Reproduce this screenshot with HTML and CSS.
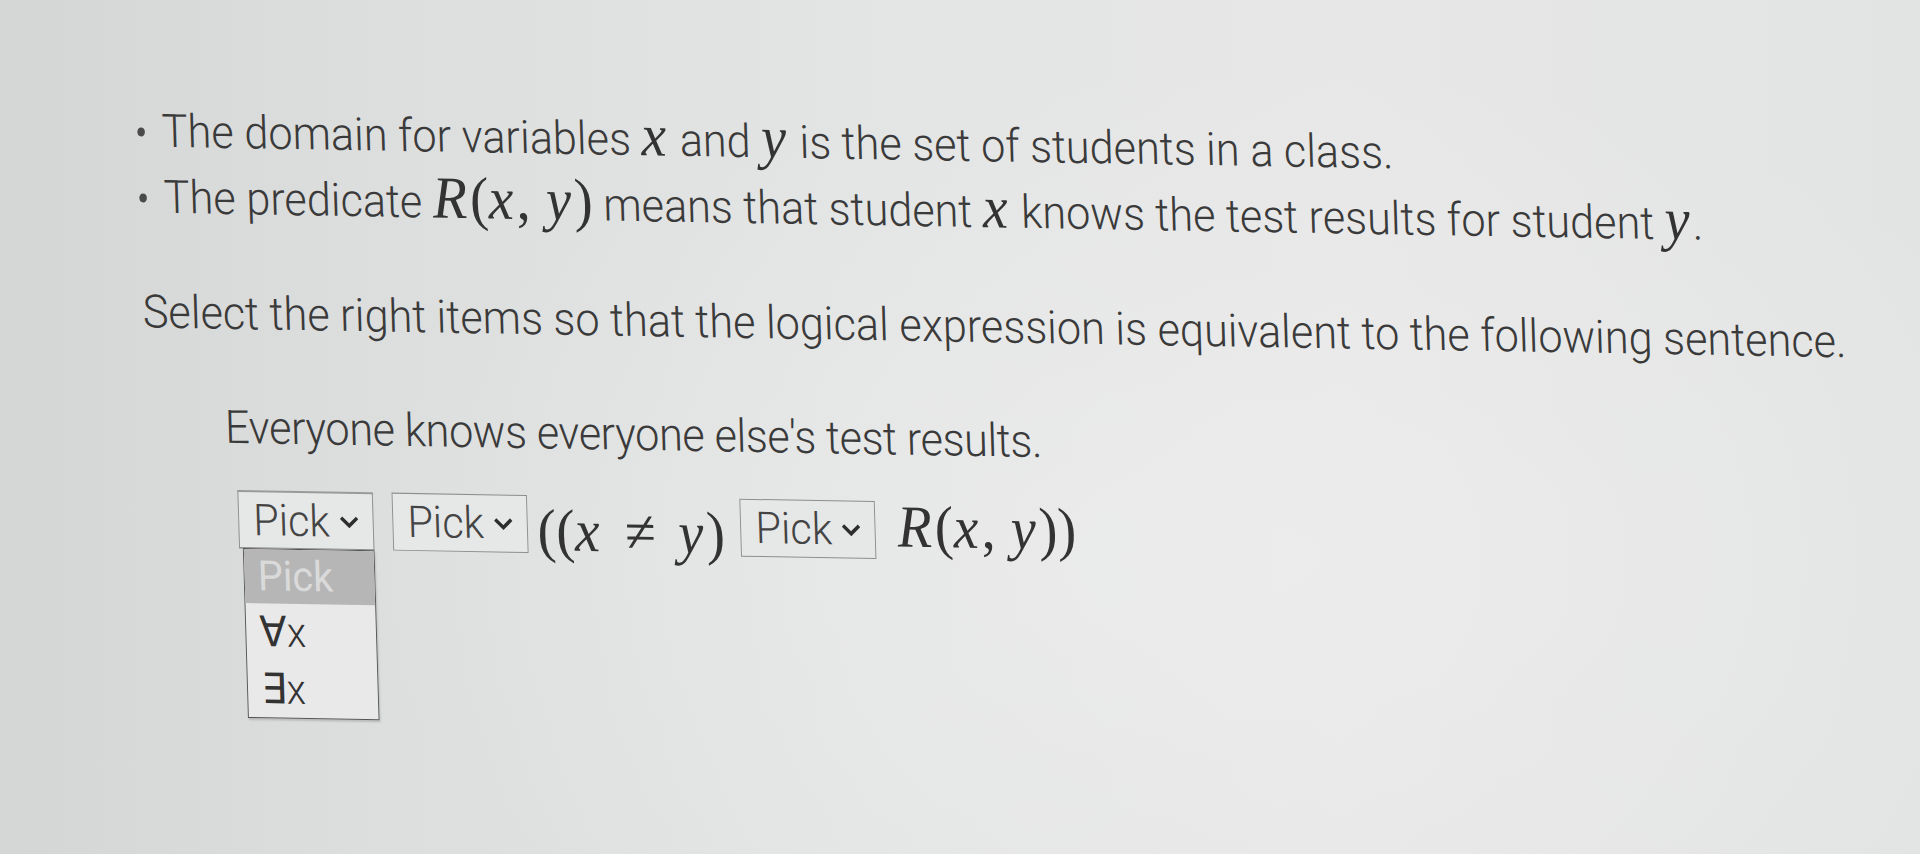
FILE: index.html
```html
<!DOCTYPE html>
<html lang="en">
<head>
<meta charset="utf-8">
<title>Quantifiers</title>
<link rel="stylesheet" href="styles.css">
</head>
<body>
<div class="page">
  <ul class="facts">
    <li>The domain for variables <span class="m"><i>x</i></span> and <span class="m"><i>y</i></span> is the set of students in a class.</li>
    <li>The predicate <span class="m"><i>R</i>(<i>x</i>,<span class="thin"></span><i>y</i>)</span> means that student <span class="m"><i>x</i></span> knows the test results for student <span class="m"><i>y</i></span>.</li>
  </ul>
  <p class="prompt">Select the right items so that the logical expression is equivalent to the following sentence.</p>
  <div class="task">
    <p class="sentence">Everyone knows everyone else's test results.</p>
    <div class="expr">
      <div class="pick first">
        <span class="pick-label">Pick</span>
        <svg class="chev" viewBox="0 0 22 14" width="22" height="14"><path d="M2.5 3 L11 11 L19.5 3" fill="none" stroke="#2e2e2e" stroke-width="3.6"/></svg>
        <ul class="menu">
          <li class="hl">Pick</li>
          <li>∀x</li>
          <li>∃x</li>
        </ul>
      </div>
      <div class="pick">
        <span class="pick-label">Pick</span>
        <svg class="chev" viewBox="0 0 22 14" width="22" height="14"><path d="M2.5 3 L11 11 L19.5 3" fill="none" stroke="#2e2e2e" stroke-width="3.6"/></svg>
      </div>
      <span class="m big b1">((<i>x</i><span class="rel">≠</span><i>y</i>)</span>
      <div class="pick">
        <span class="pick-label">Pick</span>
        <svg class="chev" viewBox="0 0 22 14" width="22" height="14"><path d="M2.5 3 L11 11 L19.5 3" fill="none" stroke="#2e2e2e" stroke-width="3.6"/></svg>
      </div>
      <span class="m big b2"><i>R</i>(<i>x</i>,<span class="thin"></span><i>y</i>))</span>
    </div>
  </div>
</div>
</body>
</html>
```

FILE: styles.css
```css
html, body {
  margin: 0;
  height: 854px;
  overflow: hidden;
}

body {
  background:
    radial-gradient(ellipse 900px 500px at 1250px 560px, rgba(240,240,240,0.55), rgba(240,240,240,0) 100%),
    linear-gradient(90deg, #d4d5d5 0%, #dcdddd 18%, #e3e4e4 45%, #e7e7e7 70%, #e2e3e3 100%);
  font-family: Roboto, "Liberation Sans", sans-serif;
  font-weight: 300;
  color: #3a3a3a;
}

.page {
  width: 1990px;
  padding-top: 95px;
  white-space: nowrap;
  transform-origin: 0 0;
  transform: matrix(0.94, 0.0165, 0.03, 1, 0, 0);
  font-size: 46px;
  line-height: 66px;
}

.facts {
  list-style: none;
  margin: 0;
  padding: 0 0 0 142px;
}

.facts li::before {
  content: "";
  display: inline-block;
  width: 8px;
  height: 9px;
  border-radius: 50%;
  background: #4a4a4a;
  margin-right: 18px;
  vertical-align: 10px;
}

.m {
  font-family: "Liberation Serif", "DejaVu Serif", serif;
  font-weight: 400;
  font-size: 1.3em;
  line-height: 0;
  color: #333;
}

.m i {
  font-style: italic;
  padding-right: 0.05em;
}

.thin {
  display: inline-block;
  width: 0.28em;
}

.rel {
  margin: 0 0.4em;
}

.prompt {
  margin: 49px 0 0 142px;
}

.task {
  margin: 48px 0 0 226px;
}

.sentence {
  margin: 0;
  letter-spacing: -0.4px;
}

.expr {
  display: flex;
  align-items: center;
  margin: 30px 0 0 11px;
}

.pick {
  position: relative;
  box-sizing: border-box;
  width: 144px;
  height: 58px;
  padding: 0 14px 0 15px;
  display: flex;
  align-items: center;
  justify-content: space-between;
  border: 1.5px solid #8e8e8e;
  background: #e6e7e7;
  font-size: 44px;
  line-height: 1;
  color: #444;
}

.pick + .pick {
  margin-left: 20px;
}

.pick.first {
  border-top: 2px solid #9a9a9a;
  box-shadow: 0 1px 0 #b0b0b0;
}

.big {
  position: relative;
  top: 6px;
}

.b1 {
  margin: 0 17px 0 10px;
}

.b2 {
  margin-left: 23px;
}

.menu {
  position: absolute;
  left: 3px;
  top: calc(100% + 1px);
  box-sizing: border-box;
  width: 140px;
  margin: 0;
  padding: 0;
  list-style: none;
  border: 1.5px solid #555;
  background: #e9e9e9;
  box-shadow: 1px 2px 2px rgba(0,0,0,0.15);
  font-size: 42px;
  color: #333;
}

.menu li {
  height: 57px;
  display: flex;
  align-items: center;
  padding-left: 14px;
}

.menu li.hl {
  height: 54px;
  background: #b6b6b6;
  color: #dadada;
  font-weight: 400;
}
```
